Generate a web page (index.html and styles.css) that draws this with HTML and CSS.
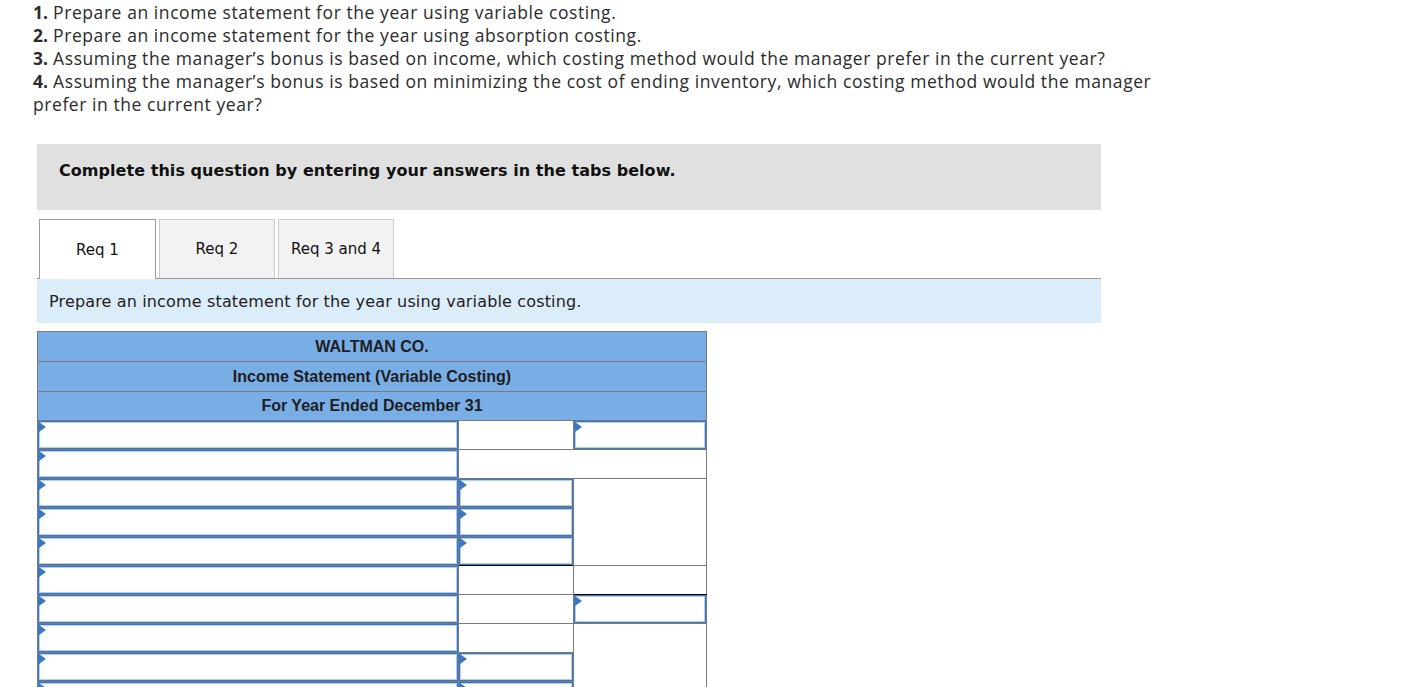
FILE: index.html
```html
<!DOCTYPE html>
<html>
<head>
<meta charset="utf-8">
<link rel="stylesheet" href="styles.css">
</head>
<body>
<div class="questions">
  <div><b>1.</b> Prepare an income statement for the year using variable costing.</div>
  <div><b>2.</b> Prepare an income statement for the year using absorption costing.</div>
  <div><b>3.</b> Assuming the manager’s bonus is based on income, which costing method would the manager prefer in the current year?</div>
  <div><b>4.</b> Assuming the manager’s bonus is based on minimizing the cost of ending inventory, which costing method would the manager<br>prefer in the current year?</div>
</div>

<div class="question-box">Complete this question by entering your answers in the tabs below.</div>

<div class="tabs">
  <div class="tab active">Req 1</div>
  <div class="tab">Req 2</div>
  <div class="tab">Req 3 and 4</div>
</div>

<div class="instruction">Prepare an income statement for the year using variable costing.</div>

<table class="stmt">
  <colgroup><col class="c1"><col class="c2"><col class="c3"></colgroup>
  <tr class="hd"><td colspan="3">WALTMAN CO.</td></tr>
  <tr class="hd"><td colspan="3">Income Statement (Variable Costing)</td></tr>
  <tr class="hd last"><td colspan="3">For Year Ended December 31</td></tr>
  <tr><td><div class="inp"></div></td><td></td><td><div class="inp"></div></td></tr>
  <tr><td><div class="inp"></div></td><td colspan="2"></td></tr>
  <tr><td><div class="inp"></div></td><td><div class="inp"></div></td><td rowspan="3"></td></tr>
  <tr><td><div class="inp"></div></td><td><div class="inp"></div></td></tr>
  <tr><td><div class="inp"></div></td><td class="uline"><div class="inp"></div></td></tr>
  <tr><td><div class="inp"></div></td><td></td><td class="uline"></td></tr>
  <tr><td><div class="inp"></div></td><td></td><td><div class="inp"></div></td></tr>
  <tr><td><div class="inp"></div></td><td></td><td rowspan="4"></td></tr>
  <tr><td><div class="inp"></div></td><td><div class="inp"></div></td></tr>
  <tr><td><div class="inp"></div></td><td><div class="inp"></div></td></tr>
  <tr><td><div class="inp"></div></td><td><div class="inp"></div></td></tr>
</table>
</body>
</html>
```

FILE: styles.css
```css
body {
  margin: 0;
  background: #fff;
  font-family: "Open Sans", "Lato", sans-serif;
  color: #2b2b2b;
}

.questions {
  padding: 1px 0 0 33px;
  font-size: 17.5px;
  line-height: 23px;
  letter-spacing: 0.57px;
}
.questions b { font-weight: 700; letter-spacing: 0; }

.question-box {
  box-sizing: border-box;
  margin: 28px 0 0 37px;
  width: 1064px;
  height: 66px;
  padding: 18px 22px 0;
  background: #e0e0e0;
  font-family: "DejaVu Sans", Verdana, sans-serif;
  font-weight: bold;
  font-size: 16px;
  line-height: 18px;
  letter-spacing: 0.05px;
  color: #111;
}

.tabs {
  box-sizing: border-box;
  margin: 9px 0 0 37px;
  width: 1064px;
  height: 60px;
  padding-left: 2px;
  display: flex;
  gap: 3px;
  border-bottom: 1px solid #999;
}
.tab {
  box-sizing: border-box;
  width: 116px;
  height: 59px;
  display: flex;
  align-items: center;
  justify-content: center;
  background: #f2f2f2;
  border: 1px solid #ccc;
  border-bottom: none;
  font-family: "DejaVu Sans", Verdana, sans-serif;
  font-size: 15px;
  color: #111;
}
.tab.active {
  background: #fff;
  border-color: #999;
  height: 60px;
  width: 117px;
  margin-bottom: -1px;
}

.instruction {
  box-sizing: border-box;
  margin-left: 37px;
  width: 1064px;
  height: 44px;
  padding-left: 12px;
  display: flex;
  align-items: center;
  background: #dcedfa;
  font-family: "DejaVu Sans", Verdana, sans-serif;
  font-size: 16px;
  letter-spacing: 0.15px;
  color: #222;
}

.stmt {
  margin: 8px 0 0 37px;
  border-collapse: collapse;
  table-layout: fixed;
  width: 669px;
  font-family: "Liberation Sans", Arial, sans-serif;
}
.stmt .c1 { width: 421px; }
.stmt .c2 { width: 115px; }
.stmt .c3 { width: 133px; }
.stmt td {
  border: 1px solid #7a7a7a;
  padding: 0;
  height: 28px;
  vertical-align: top;
}
.stmt tr.hd td {
  height: 29px;
  background: #78ade5;
  text-align: center;
  vertical-align: middle;
  font-weight: bold;
  font-size: 16px;
  color: #1e1e1e;
}
.stmt tr.hd.last td { height: 28px; }
.stmt td.uline { border-bottom: 1px solid #000; }

.inp {
  position: relative;
  box-sizing: border-box;
  height: 28px;
  border: 1px solid #3b78c4;
  box-shadow: inset 0 0 0 1px #b3cef0;
  background: #fff;
}
.inp::before {
  content: "";
  position: absolute;
  top: 0;
  left: 0;
  width: 0;
  height: 0;
  border-left: 7px solid #3b78c4;
  border-top: 5px solid transparent;
  border-bottom: 5px solid transparent;
}
```
